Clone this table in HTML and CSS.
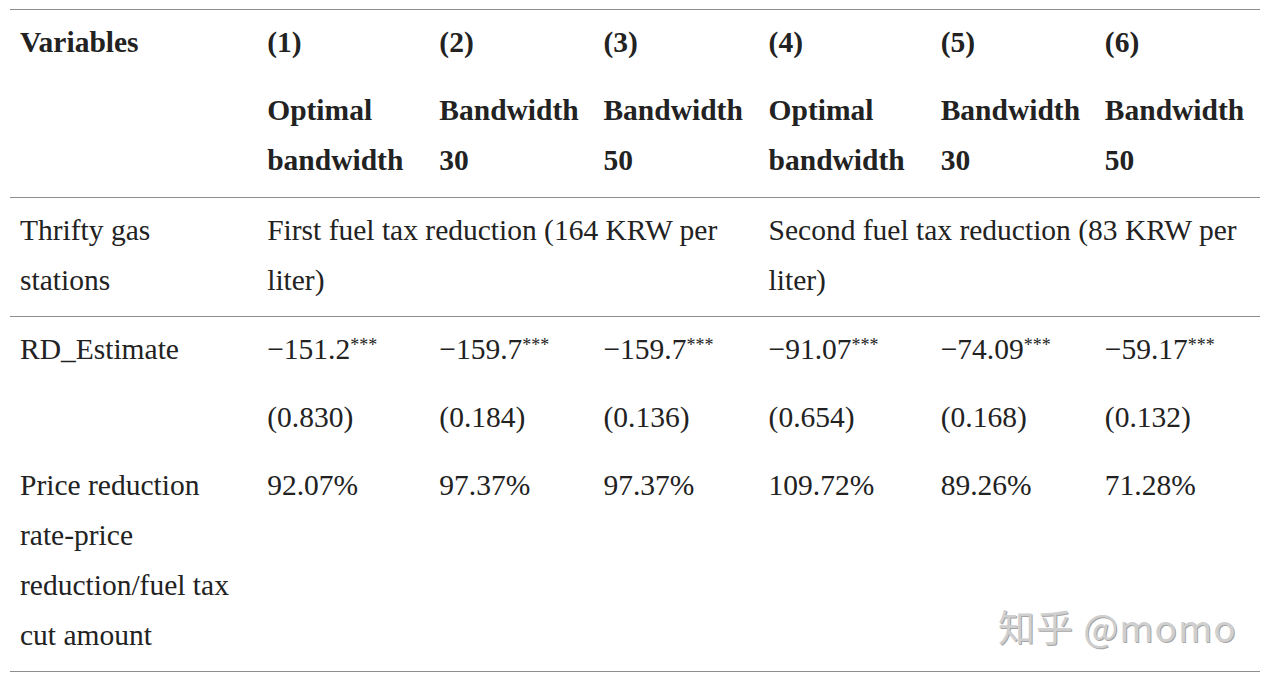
FILE: index.html
```html
<!DOCTYPE html>
<html>
<head>
<meta charset="utf-8">
<link rel="stylesheet" href="styles.css">
</head>
<body>
<div class="wrap">
<table class="results">
  <colgroup>
    <col class="c-var">
    <col class="c-a">
    <col class="c-b">
    <col class="c-c">
    <col class="c-a">
    <col class="c-b">
    <col class="c-c">
  </colgroup>
  <thead>
    <tr class="head-top">
      <th>Variables</th>
      <th>(1)</th>
      <th>(2)</th>
      <th>(3)</th>
      <th>(4)</th>
      <th>(5)</th>
      <th>(6)</th>
    </tr>
    <tr class="head-sub ruled">
      <th></th>
      <th>Optimal bandwidth</th>
      <th>Bandwidth 30</th>
      <th>Bandwidth 50</th>
      <th>Optimal bandwidth</th>
      <th>Bandwidth 30</th>
      <th>Bandwidth 50</th>
    </tr>
  </thead>
  <tbody>
    <tr class="ruled">
      <td>Thrifty gas stations</td>
      <td colspan="3">First fuel tax reduction (164 KRW per liter)</td>
      <td colspan="3">Second fuel tax reduction (83 KRW per liter)</td>
    </tr>
    <tr>
      <td>RD_Estimate</td>
      <td>−151.2<sup>***</sup></td>
      <td>−159.7<sup>***</sup></td>
      <td>−159.7<sup>***</sup></td>
      <td>−91.07<sup>***</sup></td>
      <td>−74.09<sup>***</sup></td>
      <td>−59.17<sup>***</sup></td>
    </tr>
    <tr>
      <td></td>
      <td>(0.830)</td>
      <td>(0.184)</td>
      <td>(0.136)</td>
      <td>(0.654)</td>
      <td>(0.168)</td>
      <td>(0.132)</td>
    </tr>
    <tr class="ruled">
      <td>Price reduction rate-price reduction/fuel tax cut amount</td>
      <td>92.07%</td>
      <td>97.37%</td>
      <td>97.37%</td>
      <td>109.72%</td>
      <td>89.26%</td>
      <td>71.28%</td>
    </tr>
  </tbody>
</table>
<div class="watermark">知乎 @momo</div>
</div>
</body>
</html>
```
FILE: styles.css
```css
html, body {
  margin: 0;
  padding: 0;
  background: #ffffff;
}
body {
  font-family: "Liberation Serif", "Times New Roman", serif;
  color: #222222;
}
.wrap {
  position: relative;
  padding: 9px 10px 0 10px;
  width: 1250px;
}
.results {
  width: 1250px;
  table-layout: fixed;
  border-collapse: collapse;
  border-top: 1px solid #8e8e8e;
}
.c-var { width: 247px; }
.c-a { width: 172px; }
.c-b { width: 164px; }
.c-c { width: 165px; }
.results th,
.results td {
  text-align: left;
  vertical-align: top;
  padding: 7px 10px 11px 10px;
  font-size: 29.5px;
  line-height: 50px;
}
.results .head-sub th {
  padding-bottom: 12px;
}
.results th {
  font-weight: bold;
  color: #222222;
}
.results td {
  font-weight: normal;
}
.results tr.ruled {
  border-bottom: 1px solid #8e8e8e;
}
.results sup {
  font-size: 18px;
  line-height: 0;
  vertical-align: 8px;
}
.watermark {
  position: absolute;
  left: 998px;
  top: 602px;
  font-family: "Noto Sans CJK SC", "DejaVu Sans", sans-serif;
  font-size: 37px;
  line-height: 48px;
  color: #cfcfcf;
  text-shadow: 1px 1px 0 #a5a5a5;
  letter-spacing: 1px;
}
```
